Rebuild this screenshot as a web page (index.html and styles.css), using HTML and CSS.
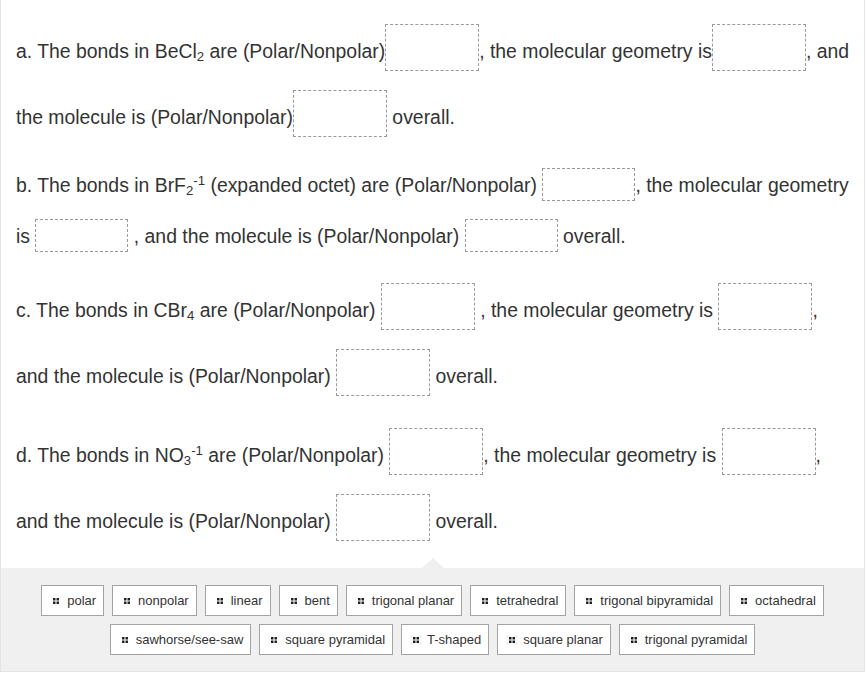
FILE: index.html
```html
<!DOCTYPE html>
<html lang="en">
<head>
<meta charset="utf-8">
<title>Polarity and molecular geometry</title>
<link rel="stylesheet" href="styles.css">
</head>
<body>
<div class="wrap">
  <div class="content">
    <div class="para">
      <div class="line big"><span class="t">a. The bonds in BeCl<sub>2</sub> are (Polar/Nonpolar)</span><span class="drop"></span><span class="t">, the molecular geometry is</span><span class="drop"></span><span class="t">, and</span></div>
      <div class="line big"><span class="t">the molecule is (Polar/Nonpolar)</span><span class="drop"></span><span class="t"> overall.</span></div>
    </div>
    <div class="para small">
      <div class="line"><span class="t">b. The bonds in BrF<sub>2</sub><sup>-1</sup> (expanded octet) are (Polar/Nonpolar) </span><span class="drop"></span><span class="t">, the molecular geometry</span></div>
      <div class="line"><span class="t">is </span><span class="drop"></span><span class="t"> , and the molecule is (Polar/Nonpolar) </span><span class="drop"></span><span class="t"> overall.</span></div>
    </div>
    <div class="para">
      <div class="line big"><span class="t">c. The bonds in CBr<sub>4</sub> are (Polar/Nonpolar) </span><span class="drop"></span><span class="t"> , the molecular geometry is </span><span class="drop"></span><span class="t">,</span></div>
      <div class="line big"><span class="t">and the molecule is (Polar/Nonpolar) </span><span class="drop"></span><span class="t"> overall.</span></div>
    </div>
    <div class="para last">
      <div class="line big"><span class="t">d. The bonds in NO<sub>3</sub><sup>-1</sup> are (Polar/Nonpolar) </span><span class="drop"></span><span class="t">, the molecular geometry is </span><span class="drop"></span><span class="t">,</span></div>
      <div class="line big"><span class="t">and the molecule is (Polar/Nonpolar) </span><span class="drop"></span><span class="t"> overall.</span></div>
    </div>
  </div>
  <div class="tray">
    <div class="chips">
      <span class="chip"><svg class="grip" viewBox="0 0 6 6"><rect x="0" y="0" width="2.5" height="2.5"/><rect x="3.5" y="0" width="2.5" height="2.5"/><rect x="0" y="3.5" width="2.5" height="2.5"/><rect x="3.5" y="3.5" width="2.5" height="2.5"/></svg>polar</span>
      <span class="chip"><svg class="grip" viewBox="0 0 6 6"><rect x="0" y="0" width="2.5" height="2.5"/><rect x="3.5" y="0" width="2.5" height="2.5"/><rect x="0" y="3.5" width="2.5" height="2.5"/><rect x="3.5" y="3.5" width="2.5" height="2.5"/></svg>nonpolar</span>
      <span class="chip"><svg class="grip" viewBox="0 0 6 6"><rect x="0" y="0" width="2.5" height="2.5"/><rect x="3.5" y="0" width="2.5" height="2.5"/><rect x="0" y="3.5" width="2.5" height="2.5"/><rect x="3.5" y="3.5" width="2.5" height="2.5"/></svg>linear</span>
      <span class="chip"><svg class="grip" viewBox="0 0 6 6"><rect x="0" y="0" width="2.5" height="2.5"/><rect x="3.5" y="0" width="2.5" height="2.5"/><rect x="0" y="3.5" width="2.5" height="2.5"/><rect x="3.5" y="3.5" width="2.5" height="2.5"/></svg>bent</span>
      <span class="chip"><svg class="grip" viewBox="0 0 6 6"><rect x="0" y="0" width="2.5" height="2.5"/><rect x="3.5" y="0" width="2.5" height="2.5"/><rect x="0" y="3.5" width="2.5" height="2.5"/><rect x="3.5" y="3.5" width="2.5" height="2.5"/></svg>trigonal planar</span>
      <span class="chip"><svg class="grip" viewBox="0 0 6 6"><rect x="0" y="0" width="2.5" height="2.5"/><rect x="3.5" y="0" width="2.5" height="2.5"/><rect x="0" y="3.5" width="2.5" height="2.5"/><rect x="3.5" y="3.5" width="2.5" height="2.5"/></svg>tetrahedral</span>
      <span class="chip"><svg class="grip" viewBox="0 0 6 6"><rect x="0" y="0" width="2.5" height="2.5"/><rect x="3.5" y="0" width="2.5" height="2.5"/><rect x="0" y="3.5" width="2.5" height="2.5"/><rect x="3.5" y="3.5" width="2.5" height="2.5"/></svg>trigonal bipyramidal</span>
      <span class="chip"><svg class="grip" viewBox="0 0 6 6"><rect x="0" y="0" width="2.5" height="2.5"/><rect x="3.5" y="0" width="2.5" height="2.5"/><rect x="0" y="3.5" width="2.5" height="2.5"/><rect x="3.5" y="3.5" width="2.5" height="2.5"/></svg>octahedral</span>
      <span class="chip"><svg class="grip" viewBox="0 0 6 6"><rect x="0" y="0" width="2.5" height="2.5"/><rect x="3.5" y="0" width="2.5" height="2.5"/><rect x="0" y="3.5" width="2.5" height="2.5"/><rect x="3.5" y="3.5" width="2.5" height="2.5"/></svg>sawhorse/see-saw</span>
      <span class="chip"><svg class="grip" viewBox="0 0 6 6"><rect x="0" y="0" width="2.5" height="2.5"/><rect x="3.5" y="0" width="2.5" height="2.5"/><rect x="0" y="3.5" width="2.5" height="2.5"/><rect x="3.5" y="3.5" width="2.5" height="2.5"/></svg>square pyramidal</span>
      <span class="chip"><svg class="grip" viewBox="0 0 6 6"><rect x="0" y="0" width="2.5" height="2.5"/><rect x="3.5" y="0" width="2.5" height="2.5"/><rect x="0" y="3.5" width="2.5" height="2.5"/><rect x="3.5" y="3.5" width="2.5" height="2.5"/></svg>T-shaped</span>
      <span class="chip"><svg class="grip" viewBox="0 0 6 6"><rect x="0" y="0" width="2.5" height="2.5"/><rect x="3.5" y="0" width="2.5" height="2.5"/><rect x="0" y="3.5" width="2.5" height="2.5"/><rect x="3.5" y="3.5" width="2.5" height="2.5"/></svg>square planar</span>
      <span class="chip"><svg class="grip" viewBox="0 0 6 6"><rect x="0" y="0" width="2.5" height="2.5"/><rect x="3.5" y="0" width="2.5" height="2.5"/><rect x="0" y="3.5" width="2.5" height="2.5"/><rect x="3.5" y="3.5" width="2.5" height="2.5"/></svg>trigonal pyramidal</span>
    </div>
  </div>
</div>
</body>
</html>
```

FILE: styles.css
```css
* { box-sizing: border-box; }
html, body { margin: 0; padding: 0; background: #ffffff; }
body {
  font-family: "Liberation Sans", Arial, sans-serif;
  color: #333333;
}
.wrap {
  width: 865px;
  border-left: 1px solid #e4e4e4;
  border-right: 1px solid #e4e4e4;
  border-bottom: 1px solid #e4e4e4;
}
.content {
  display: flex;
  flex-direction: column;
  gap: 31px;
  padding: 24px 15px 27px;
  font-size: 19.4px;
}
.para {
  display: flex;
  flex-direction: column;
  gap: 19px;
}
.para.small { gap: 18px; }
.para.last { margin-top: 1px; }
.line {
  display: flex;
  align-items: center;
}
.t {
  white-space: pre;
  line-height: 22px;
}
.big .t { padding-top: 7px; }
sub, sup {
  font-size: 0.68em;
  line-height: 0;
}
sub { vertical-align: -0.25em; }
sup { vertical-align: 0.55em; }
.drop {
  flex: none;
  width: 94px;
  height: 47px;
  border: 1px dashed #9a9a9a;
  background: #ffffff;
}
.small .drop {
  width: 93px;
  height: 33px;
}
.tray {
  position: relative;
  background: #f0f0f0;
  padding: 17px 0 16px;
}
.tray::before {
  content: "";
  position: absolute;
  top: -10px;
  left: 50%;
  margin-left: -11px;
  border-left: 11px solid transparent;
  border-right: 11px solid transparent;
  border-bottom: 10px solid #f0f0f0;
}
.chips {
  display: flex;
  flex-wrap: wrap;
  justify-content: center;
  gap: 8px;
}
.chip {
  display: inline-flex;
  align-items: center;
  height: 31px;
  padding: 0 7px 0 11px;
  background: #ffffff;
  border: 1px solid #a3a3a3;
  font-size: 13px;
  line-height: 15px;
  color: #333333;
  white-space: nowrap;
}
.grip {
  width: 6px;
  height: 6px;
  margin-right: 8px;
  fill: #222222;
  flex: none;
}
```
